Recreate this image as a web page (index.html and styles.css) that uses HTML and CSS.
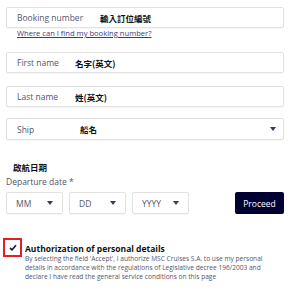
FILE: index.html
```html
<!DOCTYPE html>
<html lang="en">
<head>
    <meta charset="UTF-8">
    <title>Manage booking</title>
    <link rel="stylesheet" href="styles.css">
</head>
<body>
    <div id="booking-form">
        <div class="field">
            <span class="label">Booking number</span>
            <span class="hint">輸入訂位編號</span>
        </div>
        <a class="help-link" href="#">Where can I find my booking number?</a>

        <div class="field field-name">
            <span class="label label-short">First name</span>
            <span class="hint">名字(英文)</span>
        </div>

        <div class="field field-last">
            <span class="label label-short">Last name</span>
            <span class="hint">姓(英文)</span>
        </div>

        <div class="field field-ship">
            <span class="label label-ship">Ship</span>
            <span class="hint">船名</span>
            <span class="caret"></span>
        </div>

        <p class="date-title">啟航日期</p>
        <p class="date-label">Departure date *</p>

        <div class="date-row">
            <div class="date-select"><span>MM</span><span class="caret"></span></div>
            <div class="date-select"><span>DD</span><span class="caret"></span></div>
            <div class="date-select"><span>YYYY</span><span class="caret"></span></div>
            <button class="proceed">Proceed</button>
        </div>

        <div class="consent">
            <div class="checkbox">
                <svg width="8" height="7" viewBox="0 0 8 7">
                    <path d="M1 4 L3 5.8 L7 1.2" fill="none" stroke="#1a1a3a" stroke-width="1.7"/>
                </svg>
            </div>
            <div class="consent-text">
                <h3>Authorization of personal details</h3>
                <p>By selecting the field 'Accept', I authorize MSC Cruises S.A. to use my personal<br>details in accordance with the regulations of Legislative decree 196/2003 and<br>declare I have read the general service conditions on this page</p>
            </div>
        </div>
    </div>
</body>
</html>
```

FILE: styles.css
```css
body {
    margin: 0;
    padding: 0;
    background: #fff;
    font-family: "Open Sans", Arial, sans-serif;
    color: #555566;
}

#booking-form {
    padding: 7px 14px 0 6px;
}

.field {
    display: flex;
    align-items: center;
    box-sizing: border-box;
    height: 21px;
    border: 1px solid #e2e2e2;
    border-radius: 2px;
    background: #fff;
    box-shadow: 0 1px 1px rgba(0, 0, 0, 0.04);
    padding-left: 10px;
    font-size: 8.5px;
}

.label {
    width: 83px;
    color: #55556a;
}

.label-short {
    width: 58px;
}

.label-ship {
    width: 63px;
}

.hint {
    font-family: "Noto Sans CJK TC", serif;
    font-weight: 700;
    font-size: 8.5px;
    color: #111;
}

.help-link {
    display: block;
    margin: 1px 0 0 11px;
    font-size: 7.6px;
    line-height: 9px;
    color: #3a3a7a;
    text-decoration: underline;
}

.field-name {
    margin-top: 14px;
}

.field-last {
    margin-top: 13px;
}

.field-ship {
    margin-top: 11px;
    height: 22px;
}

.caret {
    width: 0;
    height: 0;
    border-left: 3.5px solid transparent;
    border-right: 3.5px solid transparent;
    border-top: 4px solid #3a3a55;
}

.field-ship .caret {
    margin-left: auto;
    margin-right: 7px;
}

.date-title {
    margin: 21px 0 0 7px;
    font-family: "Noto Sans CJK TC", serif;
    font-weight: 700;
    font-size: 8.5px;
    line-height: 12px;
    color: #111;
}

.date-label {
    margin: 3px 0 0 0;
    font-size: 8.5px;
    line-height: 12px;
    color: #55556a;
}

.date-row {
    display: flex;
    align-items: center;
    margin-top: 4px;
}

.date-select {
    display: flex;
    align-items: center;
    justify-content: space-between;
    width: 57px;
    height: 22px;
    box-sizing: border-box;
    padding: 0 9px 0 9px;
    margin-right: 6px;
    border: 1px solid #e2e2e2;
    border-radius: 2px;
    font-size: 8.5px;
    color: #55556a;
    box-shadow: 0 1px 1px rgba(0, 0, 0, 0.04);
}

.proceed {
    margin-left: auto;
    width: 49px;
    height: 22px;
    background: #000033;
    color: #fff;
    border: none;
    border-radius: 2px;
    font-family: "Open Sans", Arial, sans-serif;
    font-size: 8.5px;
    padding: 0;
}

.consent {
    display: flex;
    margin: 24px 0 0 -3px;
}

.checkbox {
    display: flex;
    align-items: center;
    justify-content: center;
    width: 15px;
    height: 15px;
    border: 2px solid #e41e26;
    background: #fff;
    flex-shrink: 0;
}

.consent-text {
    margin-left: 3px;
}

.consent-text h3 {
    margin: 5px 0 0 0;
    font-size: 8.5px;
    line-height: 12px;
    font-weight: 700;
    color: #111;
}

.consent-text p {
    margin: 0;
    font-size: 6.6px;
    line-height: 8.8px;
    color: #55556a;
    white-space: nowrap;
}
```
